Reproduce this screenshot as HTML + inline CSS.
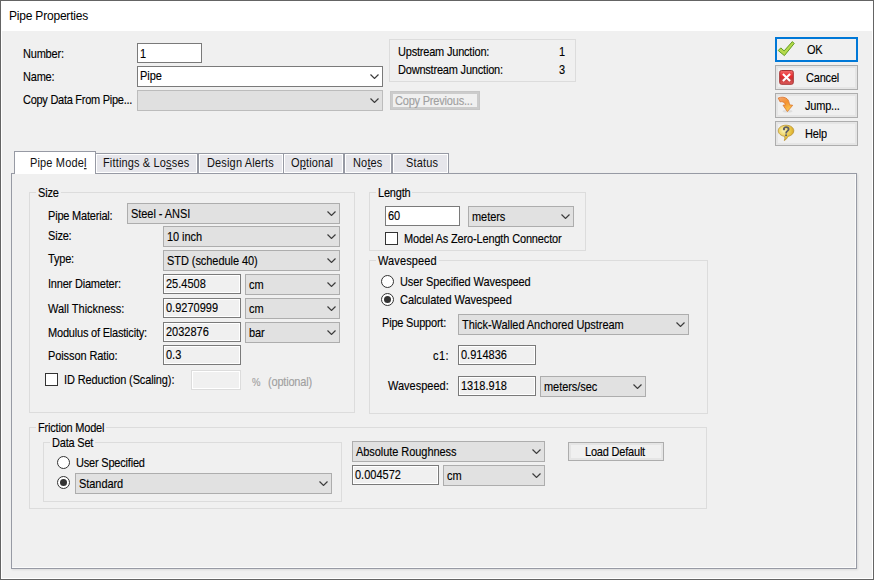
<!DOCTYPE html>
<html><head><meta charset="utf-8">
<style>
*{box-sizing:border-box;margin:0;padding:0}
html,body{width:874px;height:580px;overflow:hidden;background:#f0f0f0}
body{position:relative;font-family:"Liberation Sans",sans-serif;font-size:11px;color:#000}
.a{position:absolute}
.t{position:absolute;-webkit-text-stroke:0.12px currentColor;white-space:nowrap;line-height:13px;font-size:11px;letter-spacing:-0.2px;transform:scaleY(1.12);transform-origin:0 10px}
.tb{position:absolute;background:#fff;border:1px solid #7a7a7a}
.ro{position:absolute;background:#f0f0f0;border:1px solid #7a7a7a;box-shadow:inset 0 0 0 1px #fff}
.dis{position:absolute;background:#f0f0f0;border:1px solid #dcdcdc;box-shadow:inset 0 0 0 1px #fff}
.cb{position:absolute;background:#e1e1e1;border:1px solid #adadad}
.cb .t{letter-spacing:-0.06px}
.ro .t,.tb .t{letter-spacing:0}
.cbw{background:#fff;border-color:#7a7a7a}
.cbd{background:#e0e0e0;border-color:#bcbcbc}
.chev{position:absolute;right:3px;top:50%;margin-top:-2.5px;width:9px;height:5px}
.gb{position:absolute;border:1px solid #dcdcdc}
.chk{position:absolute;width:13px;height:13px;border:1px solid #333;background:#fff}
.rad{position:absolute;width:13px;height:13px;border-radius:50%;border:1px solid #333;background:#fff}
.rad.on::after{content:"";position:absolute;left:2px;top:2px;width:7px;height:7px;border-radius:50%;background:#333}
.tt{letter-spacing:0.15px;color:#111;-webkit-text-stroke:0}
.btn{position:absolute;border:1px solid #adadad;background:#f0f0f0;box-shadow:inset 0 0 0 2px #e5e5e5}
.tab{position:absolute;border:1px solid #979aa4;border-bottom:none;background:#e6e6eb;box-shadow:inset 1px 1px 0 #fff,inset -1px -1px 0 #fff}
</style></head><body>
<!-- window frame -->
<div class="a" style="left:0;top:0;width:874px;height:580px;border:1px solid #646464;"></div>
<div class="a" style="left:1px;top:1px;width:872px;height:578px;border:1px solid #fff;border-top:none"></div>
<div class="a" style="left:1px;top:1px;width:872px;height:30px;background:#fff"></div>
<div class="t" style="left:9px;top:9px;font-size:12px;line-height:14px;transform:none;-webkit-text-stroke:0">Pipe Properties</div>

<!-- top fields -->
<div class="t" style="left:23px;top:48px">Number:</div>
<div class="t" style="left:23px;top:71px">Name:</div>
<div class="t" style="left:23px;top:94px;letter-spacing:-0.27px">Copy Data From Pipe...</div>
<div class="tb" style="left:137px;top:43px;width:65px;height:20px"><div class="t" style="left:2px;top:4px">1</div></div>
<div class="cb cbw" style="left:137px;top:66px;width:246px;height:21px"><div class="t" style="left:2px;top:3px">Pipe</div>
<svg class="chev" viewBox="0 0 9 5"><path d="M0.5 0.5L4.5 4.5L8.5 0.5" fill="none" stroke="#3c3c3c" stroke-width="1.15"/></svg></div>
<div class="cb cbd" style="left:137px;top:90px;width:246px;height:21px">
<svg class="chev" viewBox="0 0 9 5"><path d="M0.5 0.5L4.5 4.5L8.5 0.5" fill="none" stroke="#3c3c3c" stroke-width="1.15"/></svg></div>

<div class="gb" style="left:389px;top:39px;width:187px;height:43px"></div>
<div class="t" style="left:398px;top:46px">Upstream Junction:</div>
<div class="t" style="left:559px;top:46px">1</div>
<div class="t" style="left:398px;top:64px">Downstream Junction:</div>
<div class="t" style="left:559px;top:64px">3</div>

<div class="a" style="left:390px;top:91px;width:90px;height:19px;border:1px solid #c6c6c6;box-shadow:inset 0 0 0 2px #cccccc;background:#f0f0f0"></div>
<div class="t" style="left:395px;top:95px;color:#a0a0a0">Copy Previous...</div>

<!-- right buttons -->
<div class="a" style="left:775px;top:37px;width:83px;height:25px;border:2px solid #0078d7;background:#f0f0f0"></div>
<div class="t" style="left:807px;top:44px">OK</div>
<div class="btn" style="left:775px;top:65px;width:83px;height:25px"></div>
<div class="t" style="left:806px;top:72px">Cancel</div>
<div class="btn" style="left:775px;top:93px;width:83px;height:25px"></div>
<div class="t" style="left:805px;top:100px">Jump...</div>
<div class="btn" style="left:775px;top:121px;width:83px;height:25px"></div>
<div class="t" style="left:805px;top:128px">Help</div>


<!-- icons -->
<svg class="a" style="left:776px;top:36px" width="22" height="22" viewBox="0 0 22 22">
<path d="M2.2,14.5 L4.8,11.9 L8.1,14.9 L16.4,5.6 L18.2,7.5 L8.4,19.6 Z" fill="#b6d94c" stroke="#5f9d1d" stroke-width="1" stroke-linejoin="round"/>
</svg>
<svg class="a" style="left:776px;top:66px" width="22" height="22" viewBox="0 0 22 22">
<defs><linearGradient id="rg" x1="0" y1="0" x2="0" y2="1"><stop offset="0" stop-color="#f36b6b"/><stop offset="0.45" stop-color="#e92a2d"/><stop offset="0.6" stop-color="#c53a3a"/><stop offset="1" stop-color="#e25a5a"/></linearGradient></defs>
<rect x="3.7" y="4.5" width="13.6" height="13.8" rx="1.8" fill="url(#rg)" stroke="#a53434" stroke-width="1"/>
<path d="M6.9,7.9 L14.1,15.1 M14.1,7.9 L6.9,15.1" stroke="#fff" stroke-width="2.1"/>
</svg>
<svg class="a" style="left:776px;top:94px" width="22" height="22" viewBox="0 0 22 22">
<defs><linearGradient id="og" x1="0" y1="0" x2="0.6" y2="1"><stop offset="0" stop-color="#f3a87a"/><stop offset="0.5" stop-color="#f5922e"/><stop offset="1" stop-color="#fbc84e"/></linearGradient></defs>
<ellipse cx="11.5" cy="17.3" rx="5" ry="1.2" fill="#000" opacity="0.08"/>
<path d="M2.2,4 C5,2.8 9,2.8 11,4.8 C12.5,6 13.2,8 13.5,10.8 L16.7,11.3 L11.4,17.6 L7,11.2 L9.3,11.1 C9,9.5 8.5,8.3 7,7.9 C6,7.6 5,7.7 4,7.8 Z" fill="url(#og)" stroke="#d9742e" stroke-width="0.8" stroke-linejoin="round"/>
</svg>
<svg class="a" style="left:776px;top:122px" width="22" height="22" viewBox="0 0 22 22">
<defs><radialGradient id="yg" cx="0.35" cy="0.35" r="0.75"><stop offset="0" stop-color="#faf3b8"/><stop offset="0.55" stop-color="#ecca4a"/><stop offset="1" stop-color="#d09a1e"/></radialGradient></defs>
<path d="M10,3.2 C14.5,3.2 17.8,5.6 17.8,8.8 C17.8,11.6 15.3,13.9 11.8,14.4 C11.3,16 10.2,17.6 8.3,18.6 C8.9,17.2 9,15.8 8.7,14.4 C5,13.8 2.3,11.6 2.3,8.8 C2.3,5.6 5.6,3.2 10,3.2 Z" fill="url(#yg)" stroke="#b99232" stroke-width="0.8"/>
<path d="M7.8,7.2 C7.8,5.9 8.9,5.2 10.1,5.2 C11.5,5.2 12.6,5.9 12.6,7.2 C12.6,8.5 11.3,9 10.6,9.8 C10.3,10.2 10.2,10.8 10.2,11.5" fill="none" stroke="#5d5d66" stroke-width="1.8"/><circle cx="8" cy="7.3" r="1.1" fill="#5d5d66"/>
<circle cx="10.1" cy="13.2" r="1.05" fill="#5b5b65"/>
</svg>

<!-- tabs -->
<div class="a" style="left:11px;top:173px;width:846px;height:396px;border:1px solid #979aa4;box-shadow:inset -1px -1px 0 rgba(255,255,255,0.7),1px 1px 2px rgba(0,0,0,0.09)"></div>
<div class="tab" style="left:95px;top:153px;width:103px;height:20px"></div>
<div class="tab" style="left:198px;top:153px;width:86px;height:20px"></div>
<div class="tab" style="left:283px;top:153px;width:61px;height:20px"></div>
<div class="tab" style="left:344px;top:153px;width:48px;height:20px"></div>
<div class="tab" style="left:392px;top:153px;width:57px;height:20px"></div>
<div class="a" style="left:14px;top:151px;width:82px;height:23px;border:1px solid #979aa4;border-bottom:none;background:#fff"></div>
<div class="t tt" style="left:30px;top:157px">Pipe Mode<u>l</u></div>
<div class="t tt" style="left:103px;top:157px">Fittings &amp; Lo<u>s</u>ses</div>
<div class="t tt" style="left:207px;top:157px">Desi<u>g</u>n Alerts</div>
<div class="t tt" style="left:291px;top:157px">O<u>p</u>tional</div>
<div class="t tt" style="left:353px;top:157px">No<u>t</u>es</div>
<div class="t tt" style="left:406px;top:157px">Status</div>


<!-- Size group -->
<div class="gb" style="left:29px;top:192px;width:326px;height:221px"></div>
<div class="t" style="left:36px;top:187px;background:#f0f0f0;padding:0 2px">Size</div>
<div class="t" style="left:48px;top:210px">Pipe Material:</div>
<div class="cb" style="left:127px;top:203px;width:213px;height:21px"><div class="t" style="left:3px;top:4px">Steel - ANSI</div><svg class="chev" viewBox="0 0 9 5"><path d="M0.5 0.5L4.5 4.5L8.5 0.5" fill="none" stroke="#3c3c3c" stroke-width="1.15"/></svg></div>
<div class="t" style="left:48px;top:230px">Size:</div>
<div class="cb" style="left:163px;top:226px;width:177px;height:21px"><div class="t" style="left:3px;top:4px">10 inch</div><svg class="chev" viewBox="0 0 9 5"><path d="M0.5 0.5L4.5 4.5L8.5 0.5" fill="none" stroke="#3c3c3c" stroke-width="1.15"/></svg></div>
<div class="t" style="left:48px;top:253px">Type:</div>
<div class="cb" style="left:163px;top:250px;width:177px;height:21px"><div class="t" style="left:3px;top:4px">STD (schedule 40)</div><svg class="chev" viewBox="0 0 9 5"><path d="M0.5 0.5L4.5 4.5L8.5 0.5" fill="none" stroke="#3c3c3c" stroke-width="1.15"/></svg></div>
<div class="t" style="left:48px;top:278px">Inner Diameter:</div>
<div class="ro" style="left:163px;top:274px;width:78px;height:20px"><div class="t" style="left:2px;top:3px">25.4508</div></div>
<div class="cb" style="left:245px;top:274px;width:95px;height:21px"><div class="t" style="left:3px;top:4px">cm</div><svg class="chev" viewBox="0 0 9 5"><path d="M0.5 0.5L4.5 4.5L8.5 0.5" fill="none" stroke="#3c3c3c" stroke-width="1.15"/></svg></div>
<div class="t" style="left:48px;top:303px;letter-spacing:0px">Wall Thickness:</div>
<div class="ro" style="left:163px;top:298px;width:78px;height:20px"><div class="t" style="left:2px;top:3px">0.9270999</div></div>
<div class="cb" style="left:245px;top:298px;width:95px;height:21px"><div class="t" style="left:3px;top:4px">cm</div><svg class="chev" viewBox="0 0 9 5"><path d="M0.5 0.5L4.5 4.5L8.5 0.5" fill="none" stroke="#3c3c3c" stroke-width="1.15"/></svg></div>
<div class="t" style="left:48px;top:327px">Modulus of Elasticity:</div>
<div class="ro" style="left:163px;top:322px;width:78px;height:20px"><div class="t" style="left:2px;top:3px">2032876</div></div>
<div class="cb" style="left:245px;top:322px;width:95px;height:21px"><div class="t" style="left:3px;top:4px">bar</div><svg class="chev" viewBox="0 0 9 5"><path d="M0.5 0.5L4.5 4.5L8.5 0.5" fill="none" stroke="#3c3c3c" stroke-width="1.15"/></svg></div>
<div class="t" style="left:48px;top:350px;letter-spacing:-0.1px">Poisson Ratio:</div>
<div class="ro" style="left:163px;top:345px;width:78px;height:20px"><div class="t" style="left:2px;top:3px">0.3</div></div>
<div class="chk" style="left:45px;top:373px"></div>
<div class="t" style="left:64px;top:374px;letter-spacing:-0.12px">ID Reduction (Scaling):</div>
<div class="dis" style="left:191px;top:370px;width:50px;height:20px"></div>
<div class="t" style="left:252px;top:376px;color:#a0a0a0;font-size:9.5px">%</div>
<div class="t" style="left:268px;top:376px;color:#a0a0a0">(optional)</div>

<!-- Length group -->
<div class="gb" style="left:369px;top:192px;width:217px;height:59px"></div>
<div class="t" style="left:376px;top:187px;background:#f0f0f0;padding:0 2px">Length</div>
<div class="tb" style="left:385px;top:206px;width:75px;height:20px"><div class="t" style="left:2px;top:3px">60</div></div>
<div class="cb" style="left:468px;top:206px;width:106px;height:21px"><div class="t" style="left:3px;top:4px">meters</div><svg class="chev" viewBox="0 0 9 5"><path d="M0.5 0.5L4.5 4.5L8.5 0.5" fill="none" stroke="#3c3c3c" stroke-width="1.15"/></svg></div>
<div class="chk" style="left:385px;top:232px"></div>
<div class="t" style="left:404px;top:233px;letter-spacing:-0.15px">Model As Zero-Length Connector</div>

<!-- Wavespeed group -->
<div class="gb" style="left:369px;top:260px;width:339px;height:154px"></div>
<div class="t" style="left:376px;top:255px;background:#f0f0f0;padding:0 2px;letter-spacing:0.13px">Wavespeed</div>
<div class="rad" style="left:381px;top:275px"></div>
<div class="t" style="left:400px;top:276px;letter-spacing:-0.07px">User Specified Wavespeed</div>
<div class="rad on" style="left:381px;top:293px"></div>
<div class="t" style="left:400px;top:294px;letter-spacing:-0.05px">Calculated Wavespeed</div>
<div class="t" style="left:382px;top:317px">Pipe Support:</div>
<div class="cb" style="left:458px;top:314px;width:231px;height:21px"><div class="t" style="left:3px;top:4px">Thick-Walled Anchored Upstream</div><svg class="chev" viewBox="0 0 9 5"><path d="M0.5 0.5L4.5 4.5L8.5 0.5" fill="none" stroke="#3c3c3c" stroke-width="1.15"/></svg></div>
<div class="t" style="left:433px;top:350px;letter-spacing:0.4px">c1:</div>
<div class="ro" style="left:458px;top:345px;width:78px;height:20px"><div class="t" style="left:2px;top:3px">0.914836</div></div>
<div class="t" style="left:388px;top:380px;letter-spacing:0px">Wavespeed:</div>
<div class="ro" style="left:458px;top:376px;width:78px;height:20px"><div class="t" style="left:2px;top:3px">1318.918</div></div>
<div class="cb" style="left:540px;top:376px;width:106px;height:21px"><div class="t" style="left:3px;top:4px">meters/sec</div><svg class="chev" viewBox="0 0 9 5"><path d="M0.5 0.5L4.5 4.5L8.5 0.5" fill="none" stroke="#3c3c3c" stroke-width="1.15"/></svg></div>

<!-- Friction group -->
<div class="gb" style="left:29px;top:427px;width:678px;height:82px"></div>
<div class="t" style="left:36px;top:422px;background:#f0f0f0;padding:0 2px">Friction Model</div>
<div class="gb" style="left:43px;top:442px;width:299px;height:60px"></div>
<div class="t" style="left:50px;top:437px;background:#f0f0f0;padding:0 2px">Data Set</div>
<div class="rad" style="left:57px;top:456px"></div>
<div class="t" style="left:76px;top:457px">User Specified</div>
<div class="rad on" style="left:57px;top:476px"></div>
<div class="cb" style="left:75px;top:473px;width:257px;height:21px"><div class="t" style="left:3px;top:4px">Standard</div><svg class="chev" viewBox="0 0 9 5"><path d="M0.5 0.5L4.5 4.5L8.5 0.5" fill="none" stroke="#3c3c3c" stroke-width="1.15"/></svg></div>
<div class="cb" style="left:352px;top:441px;width:193px;height:21px"><div class="t" style="left:3px;top:4px">Absolute Roughness</div><svg class="chev" viewBox="0 0 9 5"><path d="M0.5 0.5L4.5 4.5L8.5 0.5" fill="none" stroke="#3c3c3c" stroke-width="1.15"/></svg></div>
<div class="ro" style="left:352px;top:465px;width:87px;height:20px"><div class="t" style="left:2px;top:3px">0.004572</div></div>
<div class="cb" style="left:443px;top:465px;width:102px;height:21px"><div class="t" style="left:3px;top:4px">cm</div><svg class="chev" viewBox="0 0 9 5"><path d="M0.5 0.5L4.5 4.5L8.5 0.5" fill="none" stroke="#3c3c3c" stroke-width="1.15"/></svg></div>
<div class="btn" style="left:568px;top:442px;width:96px;height:19px"></div>
<div class="t" style="left:585px;top:446px">Load Default</div>
</body></html>
